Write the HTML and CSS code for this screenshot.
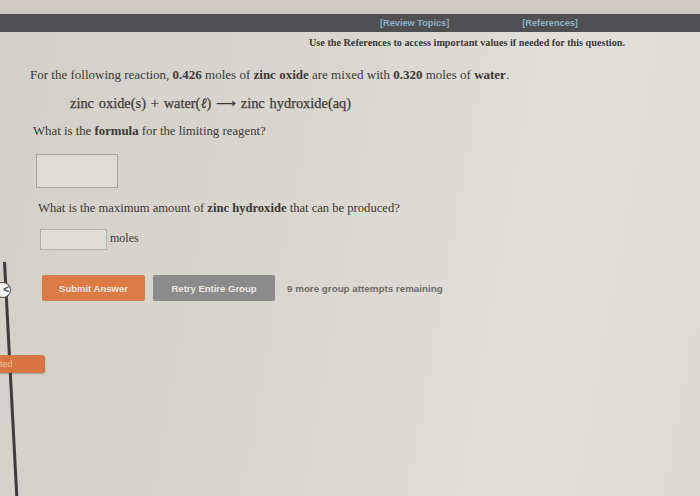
FILE: index.html
```html
<!DOCTYPE html>
<html>
<head>
<meta charset="utf-8">
<link rel="stylesheet" href="styles.css">
</head>
<body>
<div class="page">
  <div class="topstrip"></div>
  <div class="bar">
    <span class="link link-review">[Review Topics]</span>
    <span class="link link-refs">[References]</span>
  </div>
  <div class="note">Use the References to access important values if needed for this question.</div>
  <div class="content">
    <p class="intro">For the following reaction, <b>0.426</b> moles of <b>zinc oxide</b> are mixed with <b>0.320</b> moles of <b>water</b>.</p>
    <p class="eq">zinc oxide(s) + water(<i>ℓ</i>) ⟶ zinc hydroxide(aq)</p>
    <p class="q1">What is the <b>formula</b> for the limiting reagent?</p>
    <div class="box1"></div>
    <p class="q2">What is the maximum amount of <b>zinc hydroxide</b> that can be produced?</p>
    <div class="ans2"><div class="box2"></div><span class="unit">moles</span></div>
    <div class="actions">
      <button class="btn btn-submit">Submit Answer</button>
      <button class="btn btn-retry">Retry Entire Group</button>
      <span class="remaining">9 more group attempts remaining</span>
    </div>
  </div>
  <div class="frame-line"></div>
  <div class="nav-circle">&lt;</div>
  <div class="side-tab">ted</div>
</div>
</body>
</html>
```
FILE: styles.css
```css
html, body {
  margin: 0;
  padding: 0;
}
body {
  width: 700px;
  height: 496px;
  overflow: hidden;
  font-family: "Liberation Serif", "Times New Roman", serif;
  color: #3a3835;
}
.page {
  position: relative;
  width: 700px;
  height: 496px;
  background: linear-gradient(100deg, #d3d0c9 0%, #dad7d1 45%, #e1dfda 75%, #dddbd6 100%);
}
.topstrip {
  height: 14px;
  background: #cfcbc4;
}
.bar {
  height: 18px;
  background: #505052;
  display: flex;
  align-items: center;
  font-family: "Liberation Sans", Arial, sans-serif;
  font-size: 9.2px;
  font-weight: bold;
  color: #8db2c6;
}
.link-review {
  margin-left: 380px;
}
.link-refs {
  margin-left: 73px;
}
.note {
  padding-left: 309px;
  padding-top: 5px;
  font-size: 10.2px;
  font-weight: bold;
  color: #3b3937;
  height: 15px;
}
.content {
  padding-left: 30px;
}
p {
  margin: 0;
}
.intro {
  font-size: 13px;
  padding-top: 15px;
}
.eq {
  font-family: "Liberation Serif", serif;
  font-size: 14.4px;
  -webkit-text-stroke: 0.25px #3d3b38;
  word-spacing: 1.2px;
  padding-left: 40px;
  padding-top: 12px;
  color: #3d3b38;
}
.q1 {
  font-size: 12.8px;
  padding-left: 3px;
  padding-top: 12px;
}
.box1 {
  margin-left: 6px;
  margin-top: 15px;
  width: 80px;
  height: 32px;
  border: 1px solid #a8a6a2;
  background: #dedcd7;
}
.q2 {
  font-size: 12.6px;
  padding-left: 8px;
  padding-top: 13px;
}
.ans2 {
  display: flex;
  align-items: center;
  margin-left: 10px;
  margin-top: 13px;
}
.box2 {
  width: 65px;
  height: 19px;
  border: 1px solid #b5b3ae;
  background: #dfddd8;
}
.unit {
  font-size: 12px;
  margin-left: 3px;
  margin-top: -2px;
}
.actions {
  display: flex;
  align-items: center;
  margin-left: 12px;
  margin-top: 25px;
}
.btn {
  border: none;
  border-radius: 2px;
  font-family: "Liberation Sans", Arial, sans-serif;
  font-size: 9.5px;
  font-weight: bold;
  color: #ece6e0;
  height: 26px;
  padding: 0;
}
.btn-submit {
  width: 103px;
  background: #dd7b45;
}
.btn-retry {
  width: 122px;
  margin-left: 8px;
  background: #8b8b8b;
}
.remaining {
  margin-left: 12px;
  font-family: "Liberation Sans", Arial, sans-serif;
  font-size: 9.8px;
  font-weight: bold;
  color: #6e6d6a;
}
.frame-line {
  position: absolute;
  left: 3px;
  top: 262px;
  width: 3px;
  height: 240px;
  background: #3d3c3e;
  transform: rotate(-3deg);
  transform-origin: top left;
}
.nav-circle {
  position: absolute;
  left: -6px;
  top: 282px;
  width: 14px;
  height: 14px;
  border-radius: 50%;
  background: #fafafa;
  border: 1px solid #555;
  font-family: "Liberation Sans", Arial, sans-serif;
  font-size: 10px;
  font-weight: bold;
  line-height: 14px;
  text-align: right;
  padding-right: 1px;
  color: #444;
  box-sizing: content-box;
}
.side-tab {
  position: absolute;
  left: 0;
  top: 355px;
  width: 45px;
  height: 18px;
  background: #d8753e;
  border-radius: 0 3px 3px 0;
  font-family: "Liberation Sans", Arial, sans-serif;
  font-size: 9px;
  color: #efc2a6;
  line-height: 18px;
  box-shadow: 0 1px 2px rgba(0,0,0,0.25);
}
```
